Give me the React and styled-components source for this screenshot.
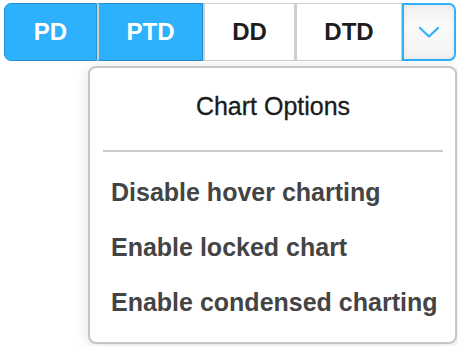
import React from 'react';
import styled, { createGlobalStyle } from 'styled-components';

const GlobalStyle = createGlobalStyle`
    html, body {
        margin:0;
        padding:0;
        background:#fff;
    }
    body {
        font-family:"Liberation Sans", Arial, sans-serif;
    }
`

const periods = [
    { label: 'PD', width: 93, active: true },
    { label: 'PTD', width: 106, active: true },
    { label: 'DD', width: 92, active: false },
    { label: 'DTD', width: 107, active: false },
];

const options = ['Disable hover charting', 'Enable locked chart', 'Enable condensed charting'];

const App = () => {
    return(
        <>
            <GlobalStyle/>
            <Page>
                <Toolbar>
                    {periods.map((p) => (
                        <PeriodButton key={p.label} $active={p.active} $width={p.width}>{p.label}</PeriodButton>
                    ))}
                    <ToggleButton aria-label='Chart options'>
                        <svg width='22' height='12' viewBox='0 0 22 12' fill='none'>
                            <path d='M2 2 L11 10.5 L20 2' stroke='#2fb0fa' strokeWidth='2.2' strokeLinecap='round' strokeLinejoin='round'/>
                        </svg>
                    </ToggleButton>
                </Toolbar>
                <Menu>
                    <MenuTitle>Chart Options</MenuTitle>
                    <Divider/>
                    <OptionList>
                        {options.map((o) => (
                            <Option key={o}>{o}</Option>
                        ))}
                    </OptionList>
                </Menu>
            </Page>
        </>
    )
}

export default App;

const Page = styled.div`
    position:relative;
    width:458px;
    height:346px;
    padding:3px 0 0 4px;
    box-sizing:border-box;
    overflow:hidden;
`

const Toolbar = styled.div`
    display:flex;
    height:58px;
`

const PeriodButton = styled.button`
    width:${(p) => p.$width}px;
    height:100%;
    margin:0;
    padding:0;
    font-family:"Liberation Sans", Arial, sans-serif;
    font-size:24px;
    font-weight:700;
    cursor:pointer;
    color:${(p) => p.$active ? '#fff' : '#1e1e1e'};
    background:${(p) => p.$active ? '#2eb1fc' : '#fff'};
    border:1px solid ${(p) => p.$active ? '#2590d2' : '#cfcfcf'};
    border-left-width:0;

    &:first-child {
        border-radius:7px 0 0 7px;
        border-left-width:1px;
    }

    & + & {
        border-left:2px solid ${(p) => p.$active ? '#2590d2' : '#cfcfcf'};
    }
`

const ToggleButton = styled.button`
    width:54px;
    height:100%;
    margin:0;
    padding:0;
    display:flex;
    align-items:center;
    justify-content:center;
    border:2px solid #2fb0fa;
    border-radius:0 7px 7px 0;
    background:linear-gradient(#f1f1f1, #fafafa 40%, #f3f3f3);
    box-shadow:inset 0 0 6px rgba(0,0,0,0.06);
    cursor:pointer;
`

const Menu = styled.div`
    position:absolute;
    top:66px;
    left:88px;
    width:369px;
    height:278px;
    box-sizing:border-box;
    padding:23px 12px 0 13px;
    background:#fff;
    border:2px solid #c6c6c6;
    border-radius:8px;
    box-shadow:0 2px 14px rgba(0,0,0,0.12);
`

const MenuTitle = styled.div`
    text-align:center;
    font-size:25px;
    line-height:30px;
    color:#1a1a1a;
    -webkit-text-stroke:0.3px #1a1a1a;
`

const Divider = styled.div`
    height:2px;
    margin-top:29px;
    background:#cbcbcb;
`

const OptionList = styled.div`
    display:flex;
    flex-direction:column;
    gap:25px;
    margin-top:25px;
    padding-left:8px;
`

const Option = styled.div`
    font-size:25px;
    font-weight:700;
    line-height:30px;
    color:#444;
    cursor:pointer;
`
